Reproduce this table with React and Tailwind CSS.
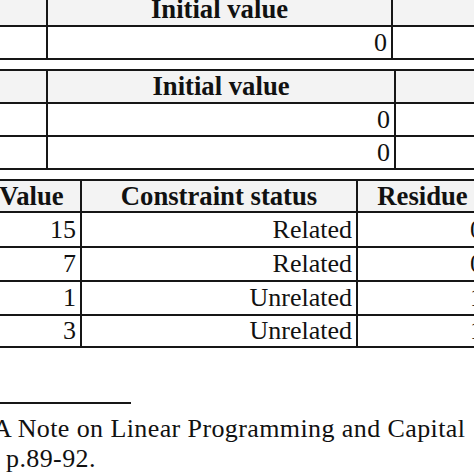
const line = 'border-[#161616]'

function Row({ h, head, cells }) {
  return (
    <div className={`flex border-b-2 ${line} ${head ? 'bg-[#f3f3f3]' : 'bg-white'}`} style={{ height: h }}>
      {cells.map((c, i) => (
        <div
          key={i}
          className={`shrink-0 flex items-center border-r-2 ${line} ${c.w} ${
            head ? 'justify-center font-bold text-[26.7px]' : 'justify-end pr-1'
          }`}
        >
          {c.t}
        </div>
      ))}
    </div>
  )
}

export default function App() {
  const t1 = ['w-[48px]', 'w-[345px]', 'w-[200px]']
  const t2 = ['w-[48px]', 'w-[348px]', 'w-[200px]']
  const t3 = ['w-[99px]', 'w-[276px]', 'w-[131px]', 'w-[100px]']

  const mk = (ws, texts) => ws.map((w, i) => ({ w, t: texts[i] || '' }))

  return (
    <div
      className="w-[474px] h-[474px] overflow-hidden bg-white text-[#111] text-[26px] leading-none"
      style={{ fontFamily: '"Liberation Serif", "Times New Roman", serif' }}
    >
      {/* table 1 */}
      <div className={`mt-[-8px] w-[600px] border-t-2 ${line}`}>
        <Row h={33} head cells={mk(t1, ['', 'Initial value', ''])} />
        <Row h={33} cells={mk(t1, ['', '0', ''])} />
      </div>

      {/* table 2 */}
      <div className={`mt-[9px] w-[600px] border-t-2 ${line}`}>
        <Row h={33} head cells={mk(t2, ['', 'Initial value', ''])} />
        <Row h={33} cells={mk(t2, ['', '0', ''])} />
        <Row h={33} cells={mk(t2, ['', '0', ''])} />
      </div>

      {/* table 3 */}
      <div className={`mt-[9px] ml-[-17px] w-[620px] border-t-2 ${line}`}>
        <Row h={32} head cells={mk(t3, ['Value', 'Constraint status', 'Residue', ''])} />
        <Row h={35} cells={mk(t3, ['15', 'Related', '0', ''])} />
        <Row h={34} cells={mk(t3, ['7', 'Related', '0', ''])} />
        <Row h={34} cells={mk(t3, ['1', 'Unrelated', '1', ''])} />
        <Row h={32} cells={mk(t3, ['3', 'Unrelated', '1', ''])} />
      </div>

      {/* footnote */}
      <div className="mt-[54px] w-[131px] h-[2px] bg-[#161616]" />
      <div className="mt-[10px] ml-[-7px] text-[26px] leading-[30px] tracking-[0.4px] whitespace-nowrap">
        <div>A Note on Linear Programming and Capital</div>
        <div className="ml-[13px]">p.89-92.</div>
      </div>
    </div>
  )
}
